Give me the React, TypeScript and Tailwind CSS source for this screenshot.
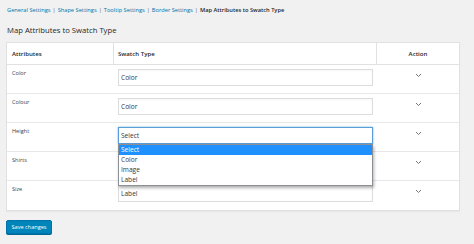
import React from 'react';

const rows = [
  { name: 'Color', value: 'Color' },
  { name: 'Colour', value: 'Color' },
  { name: 'Height', value: 'Select', open: true },
  { name: 'Shirts', value: '' },
  { name: 'Size', value: 'Label' },
];

const options = ['Select', 'Color', 'Image', 'Label'];

const Chevron = () => (
  <svg width="7" height="5" viewBox="0 0 7 5" fill="none">
    <path d="M1 1l2.5 2.5L6 1" stroke="#72777c" strokeWidth="1" />
  </svg>
);

const Sep = () => <span className="text-[#646970] mx-[2px]">|</span>;

const App: React.FC = () => {
  return (
    <div
      className="w-[474px] h-[244px] bg-[#f1f1f1] overflow-hidden text-[#32373c]"
      style={{ fontFamily: '"Open Sans", "Noto Sans", sans-serif' }}
    >
      {/* Tabs */}
      <div className="pl-[7px] pt-[6px] text-[5.7px] leading-[9px] text-[#0073aa]">
        <span>General Settings</span>
        <Sep />
        <span>Shape Settings</span>
        <Sep />
        <span>Tooltip Settings</span>
        <Sep />
        <span>Border Settings</span>
        <Sep />
        <span className="text-[#23282d] font-semibold">Map Attributes to Swatch Type</span>
      </div>

      <h1 className="pl-[7px] mt-[10px] text-[7.7px] leading-[10px] text-[#23282d] font-normal">
        Map Attributes to Swatch Type
      </h1>

      {/* Table */}
      <div className="ml-[6px] mt-[7px] w-[454px] bg-white border border-[#e1e1e1] shadow-[0_1px_1px_rgba(0,0,0,0.04)]">
        <div className="grid grid-cols-[107px_263px_1fr] h-[22px] border-b border-[#e1e1e1] text-[6.1px] font-semibold text-[#23282d]">
          <div className="flex items-center pl-[5px] border-r border-[#e1e1e1]">Attributes</div>
          <div className="flex items-center pl-[4px] border-r border-[#e1e1e1]">Swatch Type</div>
          <div className="flex items-center justify-center">Action</div>
        </div>

        {rows.map((row, i) => (
          <div
            key={row.name}
            className={`grid grid-cols-[107px_263px_1fr] h-[29px] ${i < rows.length - 1 ? 'border-b border-[#e8e8e8]' : ''}`}
          >
            <div className="pl-[5px] pt-[4px] text-[5.6px] leading-[9px] text-[#3c434a]">{row.name}</div>
            <div className="pl-[4px] pt-[4px] relative">
              <div
                className={`w-[255px] h-[17px] flex items-center pl-[2px] text-[6.6px] bg-white ${
                  row.open
                    ? 'border border-[#5b9dd9] shadow-[0_0_2px_rgba(30,140,190,0.6)]'
                    : 'border border-[#dddddd] shadow-[inset_0_1px_2px_rgba(0,0,0,0.04)]'
                }`}
              >
                {row.value}
              </div>
              {row.open && (
                <div className="absolute left-[4px] top-[21px] w-[255px] bg-white border border-[#8c8f94] shadow-[1px_2px_3px_rgba(0,0,0,0.3)] z-10 text-[6.6px] leading-[10px]">
                  {options.map((o, j) => (
                    <div
                      key={o}
                      className={`pl-[2px] ${j === 0 ? 'bg-[#1e90ff] text-white' : 'text-[#32373c]'}`}
                    >
                      {o}
                    </div>
                  ))}
                </div>
              )}
            </div>
            <div className="flex justify-center pt-[8px]">
              <Chevron />
            </div>
          </div>
        ))}
      </div>

      <button className="ml-[6px] mt-[7px] w-[46px] h-[14px] bg-[#0085ba] border border-[#0073aa] rounded-[2px] text-white text-[5.6px] leading-[12px] shadow-[0_1px_0_#006799]">
        Save changes
      </button>
    </div>
  );
};

export default App;
